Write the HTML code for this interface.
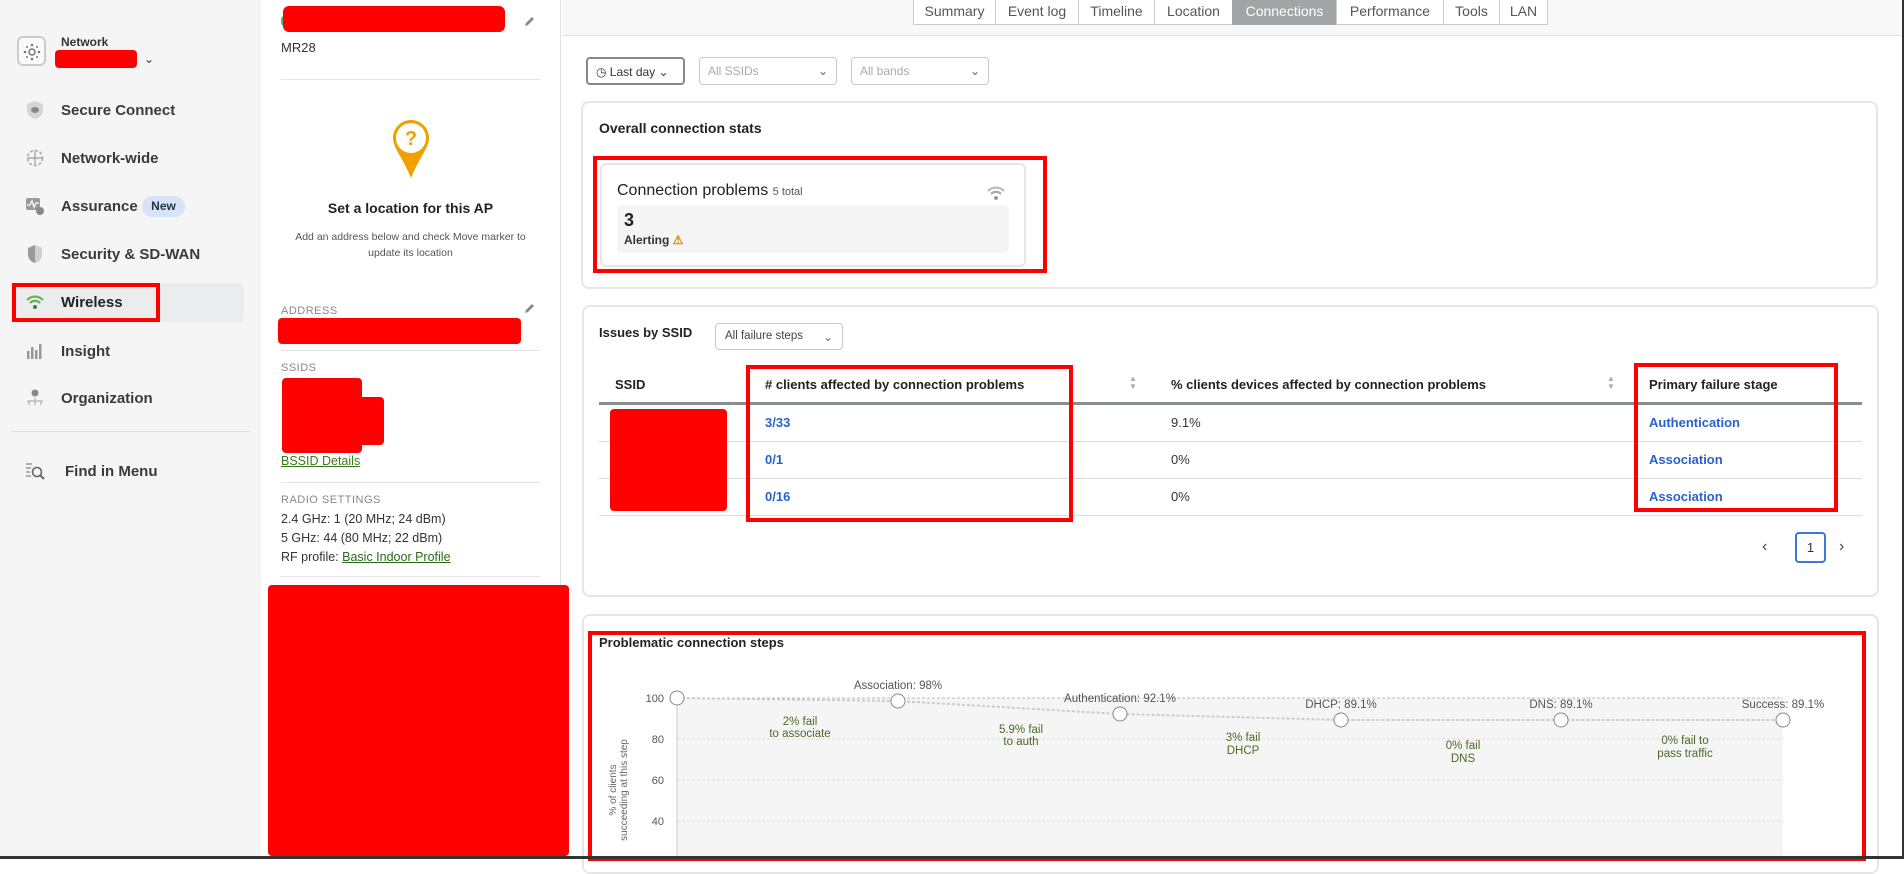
<!DOCTYPE html>
<html><head><meta charset="utf-8"><style>
*{box-sizing:border-box;margin:0;padding:0}
body{width:1904px;height:859px;overflow:hidden;position:relative;font-family:"Liberation Sans",sans-serif;color:#222;background:#fff}
.a{position:absolute}
.sb{left:0;top:0;width:261px;height:859px;background:#f5f5f5}
.nav{left:61px;font-size:15px;color:#333;font-weight:bold;color:#3a3a3a}
.ic{left:25px;width:20px;height:20px}
.mid{left:261px;top:0;width:300px;height:859px;background:#fff;border-right:1px solid #e2e2e2}
.hr{height:1px;background:#e4e4e4}
.lbl{font-size:11px;color:#888;letter-spacing:.5px}
.red{background:#f00;border-radius:4px}
.rb{border:4px solid #f00}
.card{background:#fff;border:2px solid #e6e6e6;border-radius:8px}
.tab{top:0;height:25px;border:1px solid #ccc;border-top:none;font-size:14px;color:#555;text-align:center;line-height:23px;background:#fff}
.sel{height:28px;border:1px solid #c8c8c8;border-radius:4px;font-size:12px;color:#aaa;padding:6px 8px;background:#fff}
.th{top:377px;font-size:13px;font-weight:bold;color:#222}
.link{color:#2a62c9;font-weight:bold;font-size:13px}
.td{font-size:13px;color:#333}
</style></head><body>
<div class="a sb"></div>
<div class="a" style="left:17px;top:36px;width:29px;height:30px;border:2px solid #ccc;border-radius:6px;background:#fafafa"></div>
<svg class="a" style="left:22px;top:42px" width="20" height="20" viewBox="0 0 20 20"><circle cx="10" cy="10" r="3" fill="none" stroke="#777" stroke-width="1.5"/><g fill="#777"><circle cx="10" cy="3" r="1.3"/><circle cx="10" cy="17" r="1.3"/><circle cx="3" cy="10" r="1.3"/><circle cx="17" cy="10" r="1.3"/><circle cx="5" cy="5" r="1"/><circle cx="15" cy="5" r="1"/><circle cx="5" cy="15" r="1"/><circle cx="15" cy="15" r="1"/></g></svg>
<div class="a" style="left:61px;top:35px;font-size:12px;font-weight:bold;color:#333">Network</div>
<div class="a red" style="left:55px;top:50px;width:82px;height:18px"></div>
<div class="a" style="left:144px;top:52px;font-size:12px;color:#333">&#8964;</div>

<svg class="a ic" style="top:100px" viewBox="0 0 20 20"><path d="M10 1 L18 4 V10 C18 15 14 18 10 19 C6 18 2 15 2 10 V4 Z" fill="#d5d5d5"/><ellipse cx="10" cy="10" rx="4" ry="3" fill="#888"/></svg>
<div class="a nav" style="top:102px">Secure Connect</div>
<svg class="a ic" style="top:148px" viewBox="0 0 20 20"><circle cx="10" cy="10" r="7.5" fill="none" stroke="#aaa" stroke-width="1.6" stroke-dasharray="3 2"/><path d="M2.5 10H17.5M10 2.5V17.5" stroke="#aaa" stroke-width="1.4"/></svg>
<div class="a nav" style="top:150px">Network-wide</div>
<svg class="a ic" style="top:196px" viewBox="0 0 20 20"><rect x="1" y="2" width="14" height="12" rx="2" fill="#9a9a9a"/><path d="M2 9 L5 9 L7 5 L9 11 L11 7 L14 7" stroke="#fff" fill="none" stroke-width="1.3"/><circle cx="15" cy="15" r="4" fill="#888"/></svg>
<div class="a nav" style="top:198px">Assurance</div>
<div class="a" style="left:142px;top:196px;width:43px;height:21px;border-radius:11px;background:#d8e3f7;font-size:12px;font-weight:bold;color:#234;text-align:center;line-height:21px">New</div>
<svg class="a ic" style="top:244px" viewBox="0 0 20 20"><path d="M10 1 L17 4 V10 C17 15 14 18 10 19 C6 18 3 15 3 10 V4 Z" fill="#9a9a9a"/><path d="M10 1 V19 C14 18 17 15 17 10 V4 Z" fill="#d0d0d0"/></svg>
<div class="a nav" style="top:246px">Security &amp; SD-WAN</div>
<div class="a" style="left:12px;top:283px;width:232px;height:39px;background:#ebecee;border-radius:6px"></div>
<div class="a rb" style="left:12px;top:283px;width:148px;height:39px"></div>
<svg class="a ic" style="top:292px" viewBox="0 0 20 20"><path d="M2 8 A11 11 0 0 1 18 8" stroke="#6ab04c" stroke-width="2.2" fill="none"/><path d="M5 11 A7 7 0 0 1 15 11" stroke="#6ab04c" stroke-width="2.2" fill="none"/><circle cx="10" cy="15" r="2" fill="#3a8a2a"/></svg>
<div class="a nav" style="top:294px;color:#222">Wireless</div>
<svg class="a ic" style="top:341px" viewBox="0 0 20 20"><g fill="#999"><rect x="2" y="10" width="2.5" height="8"/><rect x="6" y="6" width="2.5" height="12"/><rect x="10" y="9" width="2.5" height="9"/><rect x="14" y="3" width="2.5" height="15"/></g></svg>
<div class="a nav" style="top:343px">Insight</div>
<svg class="a ic" style="top:388px" viewBox="0 0 20 20"><circle cx="10" cy="5" r="3.5" fill="#888"/><path d="M2 13H18M4 13V17M10 10V17M16 13V17" stroke="#bbb" stroke-width="1.5"/></svg>
<div class="a nav" style="top:390px">Organization</div>
<div class="a hr" style="left:11px;top:431px;width:238px;background:#ddd"></div>
<svg class="a ic" style="top:461px" viewBox="0 0 20 20"><path d="M1 3H7M1 7H6M1 11H5M1 15H6" stroke="#888" stroke-width="1.3"/><circle cx="12" cy="11" r="4.5" fill="none" stroke="#666" stroke-width="1.6"/><path d="M15 14L19 18" stroke="#666" stroke-width="2"/></svg>
<div class="a nav" style="left:65px;top:463px">Find in Menu</div>

<div class="a mid"></div>
<div class="a" style="left:281px;top:16px;width:6px;height:10px;background:#5cb85c;border-radius:3px"></div>
<div class="a red" style="left:283px;top:6px;width:222px;height:26px;border-radius:6px"></div>
<svg class="a" style="left:524px;top:15px" width="12" height="12" viewBox="0 0 12 12"><path d="M1 11 L2 8 L8 2 L10 4 L4 10 Z" fill="#888"/></svg>
<div class="a" style="left:281px;top:40px;font-size:13px;color:#333">MR28</div>
<div class="a hr" style="left:281px;top:79px;width:259px"></div>
<svg class="a" style="left:390px;top:118px" width="42" height="62" viewBox="0 0 42 62"><path d="M21 2 C31 2 39 10 39 20 C39 30 30 38 21 60 C12 38 3 30 3 20 C3 10 11 2 21 2 Z" fill="#f0a000"/><circle cx="21" cy="20" r="15" fill="#fff"/><text x="21" y="27" text-anchor="middle" font-size="20" font-weight="bold" fill="#f0a000" font-family="Liberation Sans">?</text></svg>
<div class="a" style="left:281px;top:200px;width:259px;text-align:center;font-size:14px;font-weight:bold;color:#222">Set a location for this AP</div>
<div class="a" style="left:281px;top:229px;width:259px;text-align:center;font-size:10.5px;color:#555;line-height:16px">Add an address below and check Move marker to<br>update its location</div>
<div class="a lbl" style="left:281px;top:305px">ADDRESS</div>
<svg class="a" style="left:524px;top:302px" width="12" height="12" viewBox="0 0 12 12"><path d="M1 11 L2 8 L8 2 L10 4 L4 10 Z" fill="#888"/></svg>
<div class="a red" style="left:278px;top:318px;width:243px;height:26px"></div>
<div class="a hr" style="left:281px;top:350px;width:259px"></div>
<div class="a lbl" style="left:281px;top:362px">SSIDS</div>
<div class="a red" style="left:282px;top:378px;width:80px;height:75px"></div>
<div class="a red" style="left:300px;top:397px;width:84px;height:48px"></div>
<div class="a" style="left:281px;top:454px;font-size:12.5px;color:#3a7a1a;text-decoration:underline">BSSID Details</div>
<div class="a hr" style="left:281px;top:482px;width:259px"></div>
<div class="a lbl" style="left:281px;top:494px">RADIO SETTINGS</div>
<div class="a" style="left:281px;top:510px;font-size:12.5px;color:#333;line-height:19px">2.4 GHz: 1 (20 MHz; 24 dBm)<br>5 GHz: 44 (80 MHz; 22 dBm)<br>RF profile: <span style="color:#2a6a1a;text-decoration:underline">Basic Indoor Profile</span></div>
<div class="a hr" style="left:281px;top:576px;width:259px"></div>
<div class="a red" style="left:268px;top:585px;width:301px;height:271px"></div>

<div class="a" style="left:562px;top:0;width:1342px;height:36px;background:#f8f8f8;border-bottom:1px solid #e0e0e0"></div>
<div class="a tab" style="left:913px;width:83px">Summary</div>
<div class="a tab" style="left:995px;width:84px">Event log</div>
<div class="a tab" style="left:1078px;width:77px">Timeline</div>
<div class="a tab" style="left:1154px;width:79px">Location</div>
<div class="a tab" style="left:1232px;width:105px;background:#a3a4a6;color:#fff;border-color:#a3a4a6">Connections</div>
<div class="a tab" style="left:1336px;width:108px">Performance</div>
<div class="a tab" style="left:1443px;width:57px">Tools</div>
<div class="a tab" style="left:1499px;width:49px">LAN</div>

<div class="a sel" style="left:586px;top:57px;width:99px;border:2px solid #888;color:#333">&#9719; Last day &#8964;</div>
<div class="a sel" style="left:699px;top:57px;width:138px">All SSIDs<span style="float:right;color:#666">&#8964;</span></div>
<div class="a sel" style="left:851px;top:57px;width:138px">All bands<span style="float:right;color:#666">&#8964;</span></div>

<div class="a card" style="left:581px;top:101px;width:1297px;height:188px"></div>
<div class="a" style="left:599px;top:120px;font-size:14px;font-weight:bold;color:#222">Overall connection stats</div>
<div class="a rb" style="left:593px;top:156px;width:454px;height:117px"></div>
<div class="a card" style="left:600px;top:163px;width:426px;height:104px;border-radius:6px"></div>
<div class="a" style="left:617px;top:182px;font-size:16px;color:#222">Connection problems <span style="font-size:11px;color:#555">5 total</span></div>
<svg class="a" style="left:986px;top:184px" width="20" height="18" viewBox="0 0 20 18"><path d="M2 7 A11 11 0 0 1 18 7" stroke="#bbb" stroke-width="2.2" fill="none"/><path d="M5 10 A7 7 0 0 1 15 10" stroke="#aaa" stroke-width="2.2" fill="none"/><circle cx="10" cy="14" r="2" fill="#999"/></svg>
<div class="a" style="left:617px;top:205px;width:392px;height:48px;background:#f5f5f5;border-radius:5px"></div>
<div class="a" style="left:624px;top:210px;font-size:18px;font-weight:bold;color:#222">3</div>
<div class="a" style="left:624px;top:233px;font-size:12px;font-weight:bold;color:#333">Alerting <span style="color:#d48a00">&#9888;</span></div>

<div class="a card" style="left:582px;top:305px;width:1297px;height:292px"></div>
<div class="a" style="left:599px;top:325px;font-size:13px;font-weight:bold">Issues by SSID</div>
<div class="a sel" style="left:715px;top:323px;width:128px;height:27px;color:#444;font-size:11.5px;padding:6px 9px">All failure steps<span style="float:right;color:#666">&#8964;</span></div>
<div class="a th" style="left:615px">SSID</div>
<div class="a th" style="left:765px">
# clients affected by connection problems</div>
<div class="a" style="left:1129px;top:375px;font-size:8px;color:#aaa;line-height:8px">&#9650;<br>&#9660;</div>
<div class="a th" style="left:1171px">% clients devices affected by connection problems</div>
<div class="a" style="left:1607px;top:375px;font-size:8px;color:#aaa;line-height:8px">&#9650;<br>&#9660;</div>
<div class="a th" style="left:1649px">Primary failure stage</div>
<div class="a" style="left:599px;top:402px;width:1263px;height:3px;background:#8a8d91"></div>
<div class="a hr" style="left:599px;top:441px;width:1263px;background:#ddd"></div>
<div class="a hr" style="left:599px;top:478px;width:1263px;background:#ddd"></div>
<div class="a hr" style="left:599px;top:515px;width:1263px;background:#ddd"></div>
<div class="a red" style="left:610px;top:409px;width:117px;height:102px"></div>
<div class="a link" style="left:765px;top:415px">3/33</div>
<div class="a link" style="left:765px;top:452px">0/1</div>
<div class="a link" style="left:765px;top:489px">0/16</div>
<div class="a td" style="left:1171px;top:415px">9.1%</div>
<div class="a td" style="left:1171px;top:452px">0%</div>
<div class="a td" style="left:1171px;top:489px">0%</div>
<div class="a link" style="left:1649px;top:415px">Authentication</div>
<div class="a link" style="left:1649px;top:452px">Association</div>
<div class="a link" style="left:1649px;top:489px">Association</div>
<div class="a rb" style="left:746px;top:365px;width:327px;height:157px"></div>
<div class="a rb" style="left:1634px;top:363px;width:204px;height:149px"></div>
<div class="a" style="left:1762px;top:538px;font-size:16px;color:#444">&#8249;</div>
<div class="a" style="left:1795px;top:532px;width:31px;height:31px;border:2px solid #3b78d8;border-radius:4px;font-size:13px;text-align:center;line-height:27px;color:#333">1</div>
<div class="a" style="left:1839px;top:538px;font-size:16px;color:#444">&#8250;</div>

<div class="a card" style="left:582px;top:614px;width:1297px;height:260px"></div>
<svg class="a" style="left:0;top:0" width="1904" height="859" font-family="Liberation Sans">
<rect x="677" y="698" width="1106" height="170" fill="#f5f5f5"/>
<g stroke="#ddd" stroke-dasharray="3 2"><line x1="677" y1="698" x2="1783" y2="698" stroke="#bbb"/><line x1="677" y1="739" x2="1783" y2="739"/><line x1="677" y1="780" x2="1783" y2="780"/><line x1="677" y1="821" x2="1783" y2="821"/></g>
<line x1="677" y1="698" x2="677" y2="859" stroke="#ccc"/>
<g font-size="11" fill="#555" text-anchor="end"><text x="664" y="702">100</text><text x="664" y="743">80</text><text x="664" y="784">60</text><text x="664" y="825">40</text></g>
<text transform="translate(616,790) rotate(-90)" font-size="10" fill="#666" text-anchor="middle">% of clients</text>
<text transform="translate(627,790) rotate(-90)" font-size="10" fill="#666" text-anchor="middle">succeeding at this step</text>
<polyline points="677,698 898,701 1120,714 1341,720 1561,720 1783,720" fill="none" stroke="#ccc" stroke-width="2" stroke-dasharray="3 2"/>
<g fill="#fff" stroke="#888"><circle cx="677" cy="698" r="7"/><circle cx="898" cy="701" r="7"/><circle cx="1120" cy="714" r="7"/><circle cx="1341" cy="720" r="7"/><circle cx="1561" cy="720" r="7"/><circle cx="1783" cy="720" r="7"/></g>
<g font-size="11.5" fill="#555" text-anchor="middle"><text x="898" y="689">Association: 98%</text><text x="1120" y="702">Authentication: 92.1%</text><text x="1341" y="708">DHCP: 89.1%</text><text x="1561" y="708">DNS: 89.1%</text><text x="1783" y="708">Success: 89.1%</text></g>
<g font-size="11.5" fill="#4a6a25" text-anchor="middle"><text x="800" y="725">2% fail</text><text x="800" y="737">to associate</text><text x="1021" y="733">5.9% fail</text><text x="1021" y="745">to auth</text><text x="1243" y="741">3% fail</text><text x="1243" y="754">DHCP</text><text x="1463" y="749">0% fail</text><text x="1463" y="762">DNS</text><text x="1685" y="744">0% fail to</text><text x="1685" y="757">pass traffic</text></g>
</svg>
<div class="a" style="left:599px;top:635px;font-size:13px;font-weight:bold">Problematic connection steps</div>
<div class="a rb" style="left:588px;top:631px;width:1278px;height:230px"></div>
<div class="a" style="left:0;top:856px;width:1904px;height:3px;background:#333"></div>
<div class="a" style="left:1902px;top:0;width:2px;height:859px;background:#333"></div>
</body></html>
